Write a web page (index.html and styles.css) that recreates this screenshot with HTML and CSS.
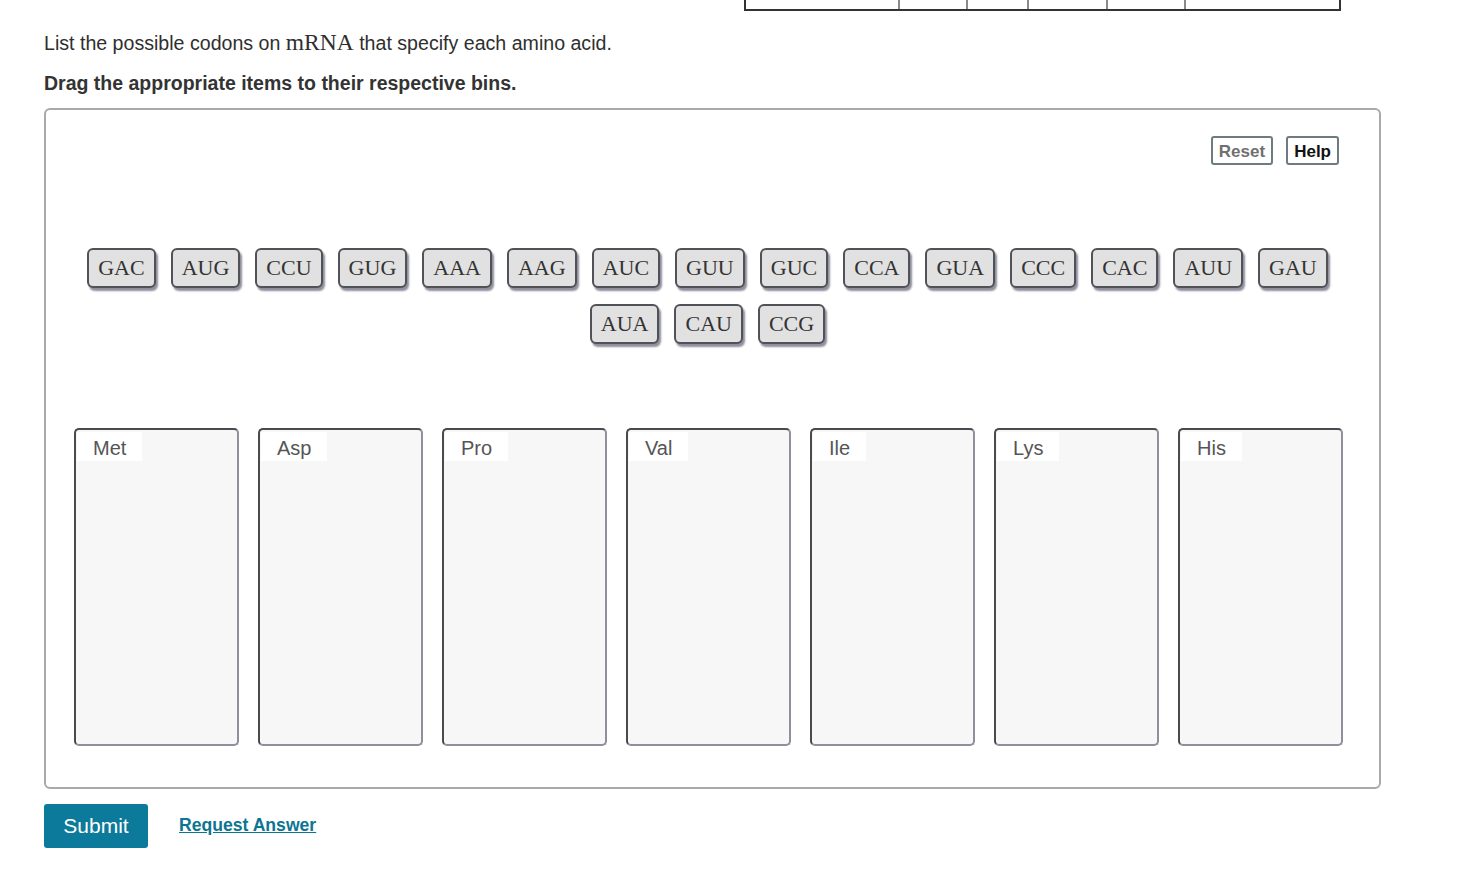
FILE: index.html
```html
<!DOCTYPE html>
<html lang="en">
<head>
<meta charset="utf-8">
<title>Codons</title>
<link rel="stylesheet" href="styles.css">
</head>
<body>
<div class="page">
  <div class="table-stub">
    <div class="cell c1"></div>
    <div class="cell c2"></div>
    <div class="cell c3"></div>
    <div class="cell c4"></div>
    <div class="cell c5"></div>
    <div class="cell c6"></div>
  </div>

  <p class="prompt">List the possible codons on <span class="math">mRNA</span> that specify each amino acid.</p>
  <p class="instr">Drag the appropriate items to their respective bins.</p>

  <div class="dnd">
    <div class="toolbar">
      <button class="tbtn reset">Reset</button>
      <button class="tbtn help">Help</button>
    </div>

    <div class="chips">
      <div class="chip">GAC</div>
      <div class="chip">AUG</div>
      <div class="chip">CCU</div>
      <div class="chip">GUG</div>
      <div class="chip">AAA</div>
      <div class="chip">AAG</div>
      <div class="chip">AUC</div>
      <div class="chip">GUU</div>
      <div class="chip">GUC</div>
      <div class="chip">CCA</div>
      <div class="chip">GUA</div>
      <div class="chip">CCC</div>
      <div class="chip">CAC</div>
      <div class="chip">AUU</div>
      <div class="chip">GAU</div>
      <div class="chip">AUA</div>
      <div class="chip">CAU</div>
      <div class="chip">CCG</div>
    </div>

    <div class="bins">
      <div class="bin"><span class="bin-label">Met</span></div>
      <div class="bin"><span class="bin-label">Asp</span></div>
      <div class="bin"><span class="bin-label">Pro</span></div>
      <div class="bin"><span class="bin-label">Val</span></div>
      <div class="bin"><span class="bin-label">Ile</span></div>
      <div class="bin"><span class="bin-label">Lys</span></div>
      <div class="bin"><span class="bin-label">His</span></div>
    </div>
  </div>

  <div class="actions">
    <button class="submit">Submit</button>
    <a class="request" href="#">Request Answer</a>
  </div>
</div>
</body>
</html>
```

FILE: styles.css
```css
html, body {
  margin: 0;
  padding: 0;
  background: #ffffff;
}

body {
  font-family: "Liberation Sans", Arial, Helvetica, sans-serif;
  color: #333333;
}

.page {
  padding-left: 44px;
}

/* bottom edge of the table above */
.table-stub {
  display: flex;
  margin-left: 700px;
  width: 593px;
  height: 9px;
  border: 2px solid #333333;
  border-top: none;
  overflow: hidden;
}

.cell {
  height: 9px;
  border-left: 2px solid #8a8a8a;
}

.c1 { width: 152px; border-left: none; }
.c2 { width: 66px; }
.c3 { width: 59px; }
.c4 { width: 77px; }
.c5 { width: 76px; }
.c6 { flex: 1; }

.prompt {
  margin: 18px 0 0 0;
  font-size: 19.6px;
  line-height: 28px;
  height: 28px;
  color: #2f2f2f;
}

.math {
  font-family: "Liberation Serif", "Times New Roman", serif;
  font-size: 23.5px;
  line-height: 20px;
}

.instr {
  margin: 12px 0 0 0;
  font-size: 19.5px;
  font-weight: bold;
  line-height: 28px;
  color: #333333;
}

.dnd {
  margin-top: 11px;
  width: 1333px;
  border: 2px solid #a9a9a9;
  border-radius: 6px;
  padding-bottom: 41px;
}

.toolbar {
  display: flex;
  justify-content: flex-end;
  gap: 13px;
  padding: 26px 40px 0 0;
}

.tbtn {
  height: 29px;
  padding: 3px 6px 0 6px;
  border: 2px solid #6e7c80;
  border-radius: 3px;
  background: #ffffff;
  font-family: "Liberation Sans", Arial, sans-serif;
  font-size: 17px;
  font-weight: bold;
  line-height: 22px;
}

.tbtn.reset { color: #707070; }
.tbtn.help { color: #111111; }

.chips {
  display: flex;
  flex-wrap: wrap;
  justify-content: center;
  column-gap: 15px;
  row-gap: 16px;
  margin-top: 83px;
  padding: 0 30px 0 20px;
}

.chip {
  height: 36px;
  padding: 0 9px;
  border: 2px solid #515158;
  border-radius: 6px;
  background: #e1e1e1;
  box-shadow: 2px 3px 2px #8e8e9c;
  font-family: "Liberation Serif", "Times New Roman", serif;
  font-size: 22px;
  line-height: 35px;
  color: #333333;
}

.bins {
  display: flex;
  gap: 19px;
  margin-top: 84px;
  padding-left: 28px;
}

.bin {
  width: 160px;
  height: 312px;
  padding: 2px 0 0 1px;
  border: 2px solid #8f8f9d;
  border-top-color: #4a4a4f;
  border-left-color: #4a4a4f;
  border-radius: 5px;
  background: #f7f7f7;
}

.bin-label {
  display: inline-block;
  height: 25px;
  padding: 4px 16px 0 16px;
  background: #ffffff;
  font-size: 20px;
  line-height: 25px;
  color: #555555;
}

.actions {
  display: flex;
  align-items: center;
  gap: 31px;
  margin-top: 15px;
}

.submit {
  width: 104px;
  height: 44px;
  border: none;
  border-radius: 3px;
  background: #0b7a9b;
  color: #ffffff;
  font-family: "Liberation Sans", Arial, sans-serif;
  font-size: 21px;
  line-height: 40px;
  padding: 0;
}

.request {
  font-size: 17.6px;
  font-weight: bold;
  color: #0b7593;
  text-decoration: underline;
  margin-top: -2px;
}
```
